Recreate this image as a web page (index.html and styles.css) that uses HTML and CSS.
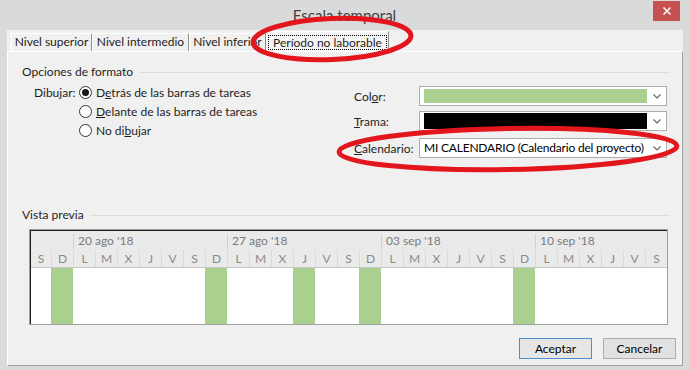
FILE: index.html
```html
<!DOCTYPE html>
<html lang="es">
<head>
<meta charset="utf-8">
<title>Escala temporal</title>
<link rel="stylesheet" href="styles.css">
</head>
<body>
<div class="window">
  <div class="titlebar">
    <div class="title">Escala temporal</div>
    <div class="close"><svg width="10" height="10" viewBox="0 0 10 10"><path d="M1.5 1.5 L8.5 8.5 M8.5 1.5 L1.5 8.5" stroke="#fff" stroke-width="1.5" fill="none"/></svg></div>
  </div>
  <div class="client">
    <div class="tabs">
      <div class="tab t1">Nivel superior</div>
      <div class="tab t2">Nivel intermedio</div>
      <div class="tab t3">Nivel inferior</div>
      <div class="tab active"><span class="focus">Período no laborable</span></div>
    </div>
    <div class="panel">
      <div class="group-title">Opciones de formato</div>
      <div class="options">
        <div class="draw">
          <div class="draw-label">Dibujar:</div>
          <div class="radios">
            <div class="radio"><span class="circle checked"></span><span>D<u>e</u>trás de las barras de tareas</span></div>
            <div class="radio"><span class="circle"></span><span><u>D</u>elante de las barras de tareas</span></div>
            <div class="radio"><span class="circle"></span><span>No di<u>b</u>ujar</span></div>
          </div>
        </div>
        <div class="format">
          <div class="field">
            <span class="flabel">Col<u>o</u>r:</span>
            <div class="dropdown"><span class="swatch green"></span><span class="arrow"><svg width="8" height="5" viewBox="0 0 8 5"><path d="M0.5 0.5 L4 4 L7.5 0.5" stroke="#666" stroke-width="1.2" fill="none"/></svg></span></div>
          </div>
          <div class="field">
            <span class="flabel"><u>T</u>rama:</span>
            <div class="dropdown"><span class="swatch black"></span><span class="arrow"><svg width="8" height="5" viewBox="0 0 8 5"><path d="M0.5 0.5 L4 4 L7.5 0.5" stroke="#666" stroke-width="1.2" fill="none"/></svg></span></div>
          </div>
          <div class="field f3">
            <span class="flabel"><u>C</u>alendario:</span>
            <div class="dropdown"><span class="value">MI CALENDARIO (Calendario del proyecto)</span><span class="arrow"><svg width="8" height="5" viewBox="0 0 8 5"><path d="M0.5 0.5 L4 4 L7.5 0.5" stroke="#666" stroke-width="1.2" fill="none"/></svg></span></div>
          </div>
        </div>
      </div>
      <div class="group-title gt2">Vista previa</div>
      <div class="preview">
        <div class="preview-inner">
          <div class="head">
            <div class="dates">
              <span></span>
              <span class="date">20 ago '18</span>
              <span class="date">27 ago '18</span>
              <span class="date">03 sep '18</span>
              <span class="date">10 sep '18</span>
            </div>
            <div class="days">
              <span class="day">S</span><span class="day">D</span>
              <span class="day">L</span><span class="day">M</span><span class="day">X</span><span class="day">J</span><span class="day">V</span><span class="day">S</span><span class="day">D</span>
              <span class="day">L</span><span class="day">M</span><span class="day">X</span><span class="day">J</span><span class="day">V</span><span class="day">S</span><span class="day">D</span>
              <span class="day">L</span><span class="day">M</span><span class="day">X</span><span class="day">J</span><span class="day">V</span><span class="day">S</span><span class="day">D</span>
              <span class="day">L</span><span class="day">M</span><span class="day">X</span><span class="day">J</span><span class="day">V</span><span class="day">S</span>
            </div>
          </div>
          <div class="grid-body">
            <span></span><span class="g"></span>
            <span></span><span></span><span></span><span></span><span></span><span></span><span class="g"></span>
            <span></span><span></span><span></span><span class="g"></span><span></span><span></span><span class="g"></span>
            <span></span><span></span><span></span><span></span><span></span><span></span><span class="g"></span>
            <span></span><span></span><span></span><span></span><span></span><span></span>
          </div>
        </div>
      </div>
      <div class="buttons">
        <button class="btn default">Aceptar</button>
        <button class="btn">Cancelar</button>
      </div>
    </div>
  </div>
  <svg class="annot" width="689" height="370" viewBox="0 0 689 370">
    <ellipse cx="332" cy="39" rx="79" ry="20.5" transform="rotate(-2.5 332 39)" fill="none" stroke="#e3161e" stroke-width="5"/>
    <ellipse cx="508" cy="149" rx="169" ry="20.5" transform="rotate(-1 508 149)" fill="none" stroke="#e3161e" stroke-width="5"/>
  </svg>
</div>
</body>
</html>
```

FILE: styles.css
```css
* { box-sizing: border-box; }
html, body { margin: 0; padding: 0; }
body {
  font-family: Lato, "Noto Sans", sans-serif;
  font-size: 12px;
  color: #1e1e1e;
  background: #dadada;
}
.window {
  position: relative;
  width: 689px;
  height: 370px;
  background: #dadada;
  display: flex;
  flex-direction: column;
  overflow: hidden;
}
.titlebar {
  height: 30px;
  display: grid;
  grid-template-columns: 1fr auto 1fr;
  align-items: start;
}
.title {
  grid-column: 2;
  font-size: 15px;
  line-height: 20px;
  margin-top: 5px;
  color: #404040;
}
.close {
  grid-column: 3;
  justify-self: end;
  width: 27px;
  height: 20px;
  margin: 1px 9px 0 0;
  background: #c75050;
  display: flex;
  align-items: center;
  justify-content: center;
}
.client {
  flex: 1;
  margin: 0 6px 4px 7px;
  background: #f0f0f0;
  display: flex;
  flex-direction: column;
}
.tabs {
  height: 21px;
  display: flex;
  align-items: flex-end;
  padding-left: 4px;
}
.tab {
  height: 18px;
  line-height: 16px;
  border-top: 1px solid #fff;
  border-left: 1px solid #fff;
  border-right: 1px solid #8f8f8f;
  text-align: center;
  white-space: nowrap;
  overflow: hidden;
  color: #1e1e1e;
}
.t1 { width: 81px; }
.t2 { width: 97px; }
.t3 { width: 77px; }
.tab.active {
  width: 123px;
  height: 20px;
  padding-top: 3px;
  background: #f5f5f5;
}
.focus {
  display: inline-block;
  border: 1px dotted #000;
  line-height: 13px;
  padding: 0 4px;
}
.panel {
  flex: 1;
  border: 1px solid;
  border-color: #fff #a0a0a0 #a0a0a0 #fff;
  padding: 12px 6px 0 14px;
  display: flex;
  flex-direction: column;
}
.group-title {
  display: flex;
  align-items: center;
  height: 16px;
  line-height: 16px;
  margin-right: 6px;
  color: #1e1e1e;
}
.group-title::after {
  content: "";
  flex: 1;
  height: 1px;
  margin-left: 6px;
  background: #dcdcdc;
}
.options {
  display: flex;
  margin-top: 3px;
}
.draw {
  display: flex;
  margin-left: 12px;
}
.draw-label {
  width: 45px;
  line-height: 19px;
}
.radios {
  display: flex;
  flex-direction: column;
}
.radio {
  display: flex;
  align-items: center;
  gap: 4px;
  height: 19px;
  white-space: nowrap;
}
.circle {
  width: 13px;
  height: 13px;
  border: 1px solid #333;
  border-radius: 50%;
  background: #fff;
  display: flex;
  align-items: center;
  justify-content: center;
}
.circle.checked::after {
  content: "";
  width: 7px;
  height: 7px;
  border-radius: 50%;
  background: #1a1a1a;
}
.format {
  margin-left: auto;
  margin-right: 9px;
  padding-top: 3px;
  width: 313px;
}
.field {
  display: flex;
  align-items: center;
  height: 20px;
}
.field + .field { margin-top: 5px; }
.field.f3 { margin-top: 7px; }
.flabel { width: 65px; white-space: nowrap; }
.dropdown {
  width: 248px;
  height: 20px;
  border: 1px solid #acacac;
  background: #fff;
  display: flex;
  align-items: center;
  padding-left: 4px;
}
.swatch { width: 223px; height: 14px; }
.green { background: #a9d08e; }
.black { background: #000; height: 16px; }
.value {
  width: 223px;
  line-height: 16px;
  white-space: nowrap;
  letter-spacing: -0.2px;
  color: #000;
}
.arrow {
  flex: 1;
  display: flex;
  justify-content: center;
  align-items: center;
}
.gt2 { margin-top: 49px; }
.preview {
  margin: 6px 0 0 7px;
  width: 639px;
  border: 1px solid #a0a0a0;
}
.preview-inner {
  border-top: 1px solid #1a1a1a;
  border-left: 1px solid #1a1a1a;
}
.head {
  background: #eaeaea;
  border-bottom: 1px solid #c8c8c8;
}
.dates {
  display: grid;
  grid-template-columns: 42px 154px 154px 154px 132px;
  height: 18px;
}
.date {
  border-left: 1px solid #d0d0d0;
  margin-top: 3px;
  padding-left: 4px;
  line-height: 14px;
  color: #7a7a7a;
  white-space: nowrap;
}
.days {
  display: grid;
  grid-template-columns: 20px repeat(28, 22px);
  height: 18px;
}
.day {
  margin-top: 1px;
  height: 17px;
  padding-top: 2px;
  line-height: 14px;
  text-align: center;
  color: #8a8a8a;
  border-left: 1px solid #dadada;
}
.day:first-child { border-left: 0; }
.grid-body {
  display: grid;
  grid-template-columns: 20px repeat(28, 22px);
  height: 56px;
  background: #fff;
}
.grid-body .g { background: #a9d08e; }
.buttons {
  display: flex;
  justify-content: flex-end;
  gap: 11px;
  margin-top: 13px;
}
.btn {
  width: 73px;
  height: 21px;
  padding: 0;
  font: inherit;
  color: #000;
  border: 1px solid #adadad;
  background: #e1e1e1;
}
.btn.default {
  border-color: #4a8fcf;
  background: #e6e6e6;
}
.annot {
  position: absolute;
  top: 0;
  left: 0;
  pointer-events: none;
}
```
